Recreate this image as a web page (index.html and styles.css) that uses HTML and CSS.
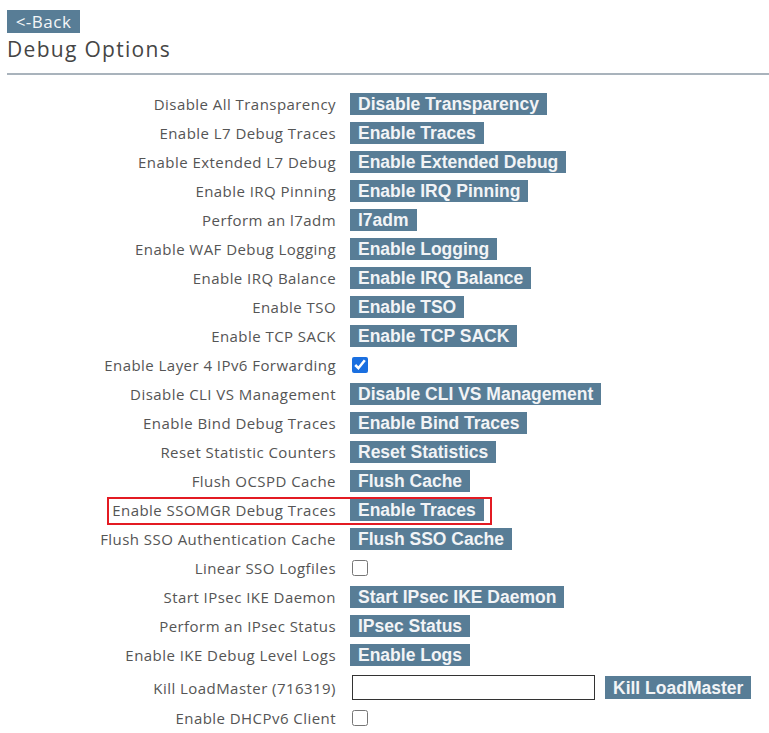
FILE: index.html
```html
<!DOCTYPE html>
<html>
<head>
<meta charset="utf-8">
<link rel="stylesheet" href="styles.css">
</head>
<body>
<div class="page">
  <button class="back">&lt;-Back</button>
  <h1 class="title">Debug Options</h1>
  <hr class="rule">
  <div class="form">
    <span class="lbl">Disable All Transparency</span><div class="ctl"><button class="btn">Disable Transparency</button></div>
    <span class="lbl">Enable L7 Debug Traces</span><div class="ctl"><button class="btn">Enable Traces</button></div>
    <span class="lbl">Enable Extended L7 Debug</span><div class="ctl"><button class="btn">Enable Extended Debug</button></div>
    <span class="lbl">Enable IRQ Pinning</span><div class="ctl"><button class="btn">Enable IRQ Pinning</button></div>
    <span class="lbl">Perform an l7adm</span><div class="ctl"><button class="btn">l7adm</button></div>
    <span class="lbl">Enable WAF Debug Logging</span><div class="ctl"><button class="btn">Enable Logging</button></div>
    <span class="lbl">Enable IRQ Balance</span><div class="ctl"><button class="btn">Enable IRQ Balance</button></div>
    <span class="lbl">Enable TSO</span><div class="ctl"><button class="btn">Enable TSO</button></div>
    <span class="lbl">Enable TCP SACK</span><div class="ctl"><button class="btn">Enable TCP SACK</button></div>
    <span class="lbl">Enable Layer 4 IPv6 Forwarding</span><div class="ctl"><input type="checkbox" class="chk" checked></div>
    <span class="lbl">Disable CLI VS Management</span><div class="ctl"><button class="btn">Disable CLI VS Management</button></div>
    <span class="lbl">Enable Bind Debug Traces</span><div class="ctl"><button class="btn">Enable Bind Traces</button></div>
    <span class="lbl">Reset Statistic Counters</span><div class="ctl"><button class="btn">Reset Statistics</button></div>
    <span class="lbl">Flush OCSPD Cache</span><div class="ctl"><button class="btn">Flush Cache</button></div>
    <span class="lbl">Enable SSOMGR Debug Traces</span><div class="ctl"><button class="btn">Enable Traces</button></div>
    <span class="lbl">Flush SSO Authentication Cache</span><div class="ctl"><button class="btn">Flush SSO Cache</button></div>
    <span class="lbl">Linear SSO Logfiles</span><div class="ctl"><input type="checkbox" class="chk"></div>
    <span class="lbl">Start IPsec IKE Daemon</span><div class="ctl"><button class="btn">Start IPsec IKE Daemon</button></div>
    <span class="lbl">Perform an IPsec Status</span><div class="ctl"><button class="btn">IPsec Status</button></div>
    <span class="lbl">Enable IKE Debug Level Logs</span><div class="ctl"><button class="btn">Enable Logs</button></div>
    <span class="lbl lbl-input">Kill LoadMaster (716319)</span><div class="ctl ctl-input"><input type="text" class="txt"><button class="btn btn-kill">Kill LoadMaster</button></div>
    <span class="lbl">Enable DHCPv6 Client</span><div class="ctl"><input type="checkbox" class="chk"></div>
    <div class="highlight"></div>
  </div>
</div>
</body>
</html>
```
FILE: styles.css
```css
html, body {
  margin: 0;
  padding: 0;
  background: #ffffff;
}
.page {
  padding: 10px 0 0 7px;
  font-family: "Open Sans", "Noto Sans", sans-serif;
  color: #555;
}
.back {
  display: block;
  height: 23px;
  width: 73px;
  padding: 0;
  margin: 0;
  border: none;
  background: #587d96;
  color: #f4f6f8;
  font-family: "Open Sans", sans-serif;
  font-size: 17px;
  letter-spacing: 0.5px;
  line-height: 23px;
}
.title {
  margin: 2px 0 0 0;
  font-size: 21px;
  font-weight: 400;
  line-height: 28px;
  color: #454545;
  letter-spacing: 1.3px;
}
.rule {
  margin: 10px 0 0 0;
  height: 2px;
  border: none;
  background: #a9b3bc;
}
.form {
  position: relative;
  margin-top: 18px;
  display: grid;
  grid-template-columns: 329px auto;
  column-gap: 14px;
  row-gap: 7px;
  align-items: center;
}
.lbl {
  text-align: right;
  font-size: 15px;
  letter-spacing: 0.45px;
  line-height: 22px;
  color: #555;
  white-space: nowrap;
}
.lbl-input {
  padding-top: 2px;
}
.ctl {
  display: flex;
  align-items: center;
  min-height: 22px;
}
.ctl-input {
  padding-top: 2px;
}
.btn {
  height: 22px;
  padding: 0 8px;
  margin: 0;
  border: none;
  background: #587d96;
  color: #f2f4f6;
  font-family: "Liberation Sans", Arial, sans-serif;
  font-weight: 700;
  font-size: 17.5px;
  line-height: 22px;
  white-space: nowrap;
}
.btn-kill {
  margin-left: 10px;
  height: 23px;
}
.chk {
  width: 16px;
  height: 16px;
  margin: 0 0 0 2px;
  accent-color: #1a6fe0;
}
.txt {
  box-sizing: border-box;
  width: 243px;
  height: 25px;
  margin: 0 0 0 2px;
  border: 1px solid #333;
  padding: 0 4px;
}
.highlight {
  position: absolute;
  left: 100px;
  top: 404px;
  width: 385px;
  height: 28px;
  box-sizing: border-box;
  border: 2px solid #e31b23;
  pointer-events: none;
}
```
